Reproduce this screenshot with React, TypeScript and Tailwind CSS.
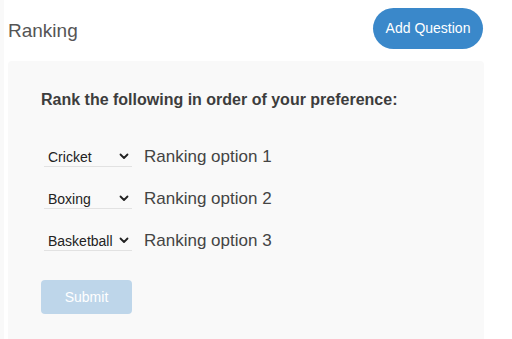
import { useState } from 'react';

const sports = ['Cricket', 'Boxing', 'Basketball'];

function Chevron() {
  return (
    <svg width="10" height="7" viewBox="0 0 10 7" className="shrink-0">
      <path d="M1.5 1.5 L5 5 L8.5 1.5" fill="none" stroke="#222" strokeWidth="1.8" strokeLinecap="round" strokeLinejoin="round" />
    </svg>
  );
}

export default function App() {
  const [picks] = useState(sports);

  return (
    <div className="w-[512px] h-[339px] overflow-hidden bg-white flex font-['Liberation_Sans',Arial,sans-serif]">
      <div className="w-[4px] bg-[#f9f9f9] shrink-0" />
      <div className="flex-1 pl-1">
        <div className="flex items-center justify-between h-[61px] pr-[29px] pb-[4px]">
          <h2 className="text-[19px] text-[#555] mt-[6px] font-normal">Ranking</h2>
          <button className="h-[41px] w-[110px] rounded-full bg-[#3a88ca] text-white text-[14px]">Add Question</button>
        </div>
        <div className="w-[476px] h-[278px] bg-[#f9f9f9] rounded-t-[4px] pl-[33px] pt-[30px]">
          <p className="text-[16px] font-bold text-[#3d3d3d] leading-[18px]">Rank the following in order of your preference:</p>
          <div className="mt-[38px] flex flex-col gap-[22px]">
            {picks.map((s, i) => (
              <div key={s} className="flex items-center h-[20px]">
                <div className="ml-[3px] w-[88px] h-[20px] border-b border-[#e2e2e2] flex items-center justify-between pl-[4px] pr-[3px]">
                  <span className="text-[14px] leading-[18px] text-[#222]">{s}</span>
                  <Chevron />
                </div>
                <span className="ml-[12px] text-[17px] leading-[20px] text-[#444]">Ranking option {i + 1}</span>
              </div>
            ))}
          </div>
          <button className="mt-[29px] w-[91px] h-[34px] rounded-[4px] bg-[#bed6ea] text-white text-[14px]">Submit</button>
        </div>
      </div>
    </div>
  );
}
